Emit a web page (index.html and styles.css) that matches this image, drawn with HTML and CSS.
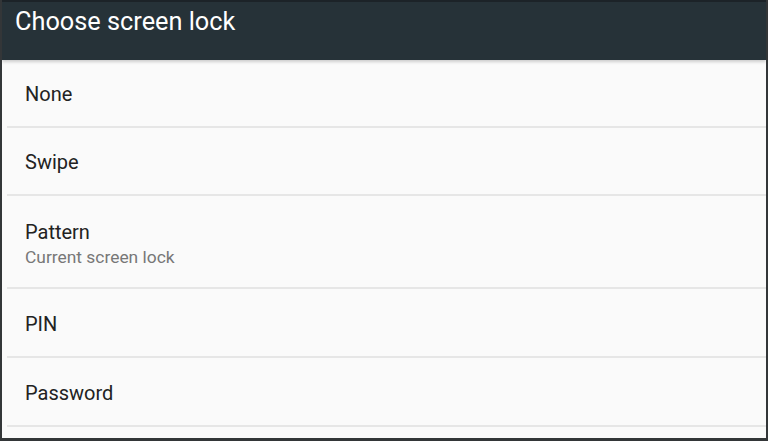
FILE: index.html
```html
<!DOCTYPE html>
<html>
<head>
  <title>Choose screen lock</title>
  <link rel="stylesheet" href="styles.css">
</head>
<body>
  <div class="screen">
    <div class="toolbar">
      <span class="toolbar-title">Choose screen lock</span>
    </div>
    <div class="list">
      <div class="item">
        <span class="item-title">None</span>
      </div>
      <div class="item">
        <span class="item-title">Swipe</span>
      </div>
      <div class="item item-tall">
        <span class="item-title">Pattern</span>
        <span class="item-summary">Current screen lock</span>
      </div>
      <div class="item item-wide">
        <span class="item-title">PIN</span>
      </div>
      <div class="item item-wide">
        <span class="item-title">Password</span>
      </div>
      <div class="item item-last"></div>
    </div>
  </div>
</body>
</html>
```

FILE: styles.css
```css
body {
  margin: 0;
  font-family: Roboto, "Noto Sans", sans-serif;
}

.screen {
  box-sizing: border-box;
  width: 768px;
  height: 441px;
  border: 2px solid #333638;
  border-top: 0;
  border-bottom-width: 3px;
  background-color: #fafafa;
  display: flex;
  flex-direction: column;
  overflow: hidden;
}

/* barra de titulo */
.toolbar {
  height: 60px;
  flex-shrink: 0;
  background-color: #263238;
  border-top: 2px solid #1c2328;
  box-sizing: border-box;
  box-shadow: 0 2px 3px rgba(0, 0, 0, 0.18);
  display: flex;
  align-items: center;
  padding-left: 13px;
  padding-bottom: 20px;
  position: relative;
  z-index: 1;
}

.toolbar-title {
  color: #ffffff;
  font-size: 25.3px;
}

.list {
  display: flex;
  flex-direction: column;
}

.item {
  height: 68px;
  box-sizing: border-box;
  border-bottom: 2px solid #e6e6e6;
  margin-left: 5px;
  padding-left: 18px;
  padding-top: 3px;
  display: flex;
  flex-direction: column;
  justify-content: center;
  flex-shrink: 0;
}

.item-tall {
  height: 93px;
  padding-top: 5px;
}

.item-wide {
  height: 69px;
}

.item-title {
  color: #222222;
  font-size: 20px;
  line-height: 25px;
}

.item-summary {
  color: #777777;
  font-size: 17.4px;
  line-height: 24px;
}

.item-last {
  border-bottom: 0;
}
```
